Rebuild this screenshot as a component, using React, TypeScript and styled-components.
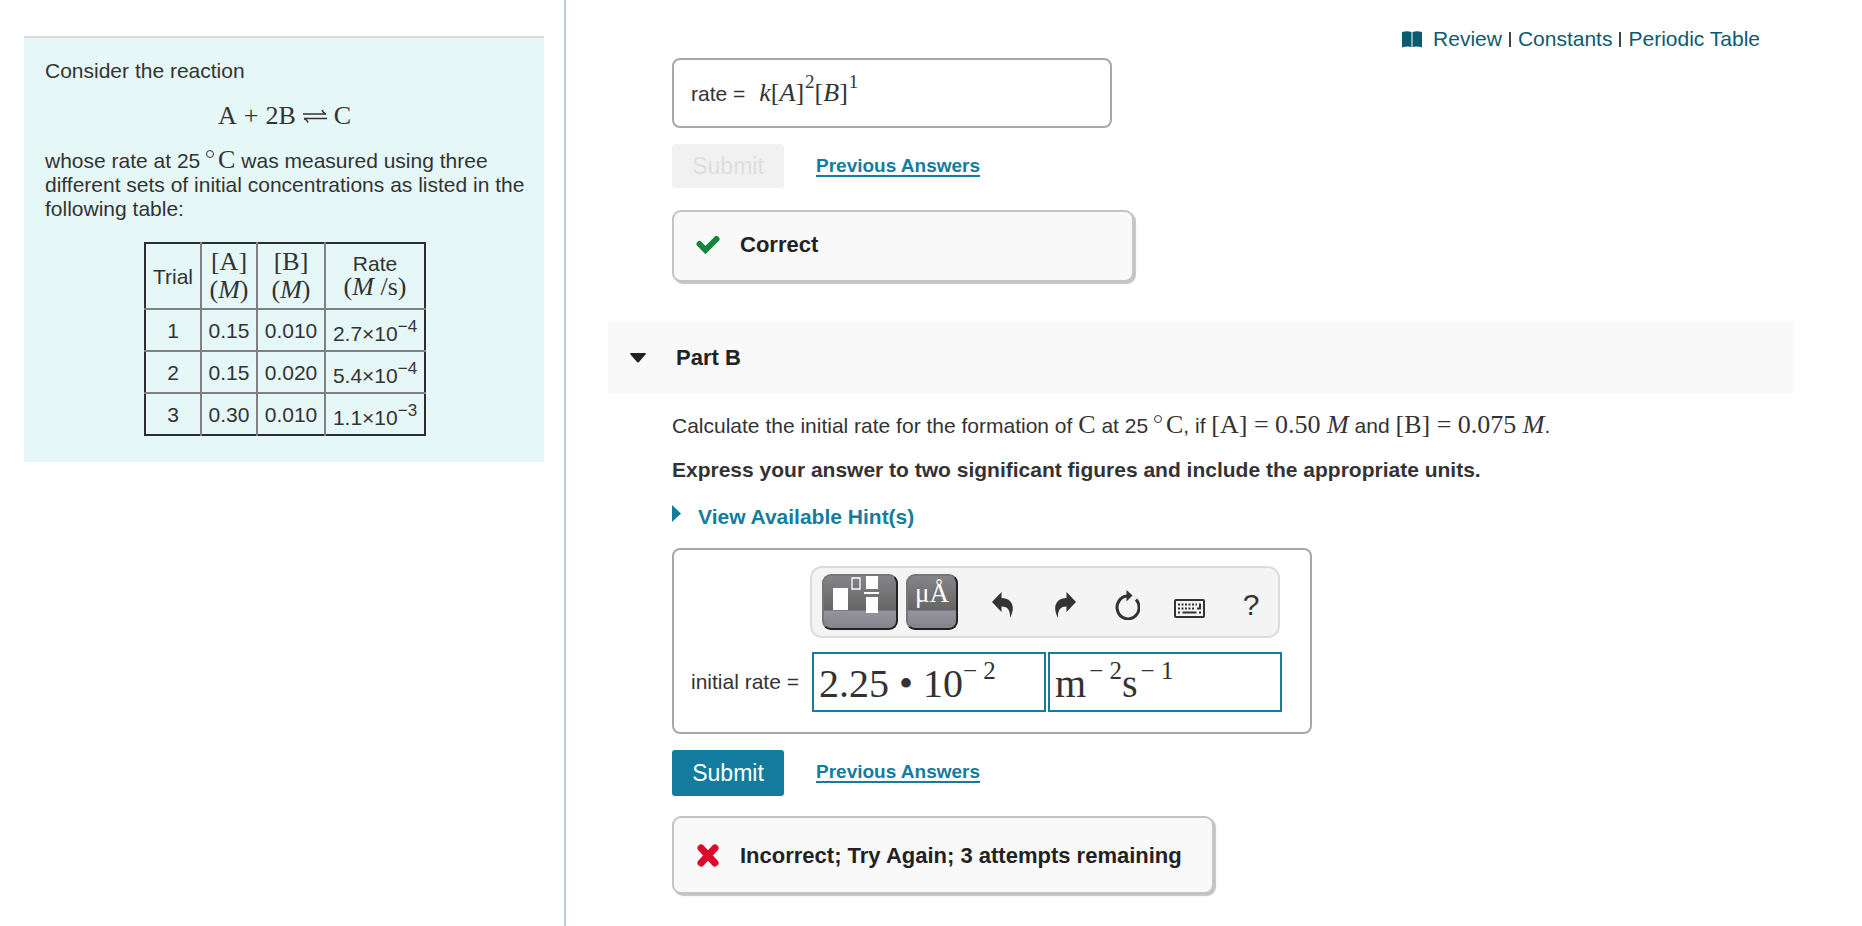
import React from "react";
import styled, { createGlobalStyle } from "styled-components";

const sans = `"Liberation Sans", Arial, Helvetica, sans-serif`;
const serif = `"Liberation Serif", "Times New Roman", serif`;
const teal = "#147c9e";

const GlobalStyle = createGlobalStyle`
  *, *::before, *::after { box-sizing: border-box; }
  body { margin: 0; background: #fff; color: #333; font: 21px/24px ${sans}; }
  button { font: inherit; cursor: pointer; }
`;

const Page = styled.div`
  display: grid;
  grid-template-columns: 566px minmax(0, 1fr);
  min-height: 100vh;
`;

const Side = styled.aside`
  padding: 36px 20px 0 24px;
  border-right: 2px solid #bccbdc;
`;

const Problem = styled.section`
  border-top: 2px solid #dcdcde;
  background: #e6f7f8;
  padding: 21px 14px 26px 21px;
`;

const Para = styled.p`
  margin: 0;
`;

const Equation = styled.div`
  display: flex;
  justify-content: center;
  align-items: center;
  gap: 7px;
  margin: 21px 0;
  padding-right: 6px;
  font: 26px/24px ${serif};
`;

const Math = styled.span`
  font-family: ${serif};
  font-size: 26px;
  line-height: 1px;
  white-space: nowrap;
`;

const Degree = styled.span`
  display: inline-block;
  width: 8px;
  height: 8px;
  margin: 0 4px 0 0;
  border: 1px solid #333;
  border-radius: 50%;
  vertical-align: 10px;
`;

const Power = styled.sup<{ $size: number; $raise: number; $gap?: number }>`
  font-size: ${(p) => p.$size}px;
  line-height: 1px;
  vertical-align: ${(p) => p.$raise}px;
  margin-left: ${(p) => p.$gap ?? 0}px;
`;

const Data = styled.table`
  margin: 21px 0 0 99px;
  width: 282px;
  table-layout: fixed;
  border-collapse: collapse;
  border: 2px solid #2b2d2e;
  text-align: center;

  && thead th { border-top: 0; }
  && tbody tr:last-child td { border-bottom: 0; }
  && tr > :first-child { border-left: 0; }
  && tr > :last-child { border-right: 0; }
`;

const HeadCell = styled.th<{ $width: number; $tight?: boolean }>`
  width: ${(p) => p.$width}px;
  height: 66px;
  padding: ${(p) => (p.$tight ? 0 : 2)}px 0 0;
  border: 2px solid #808080;
  font-weight: normal;
  line-height: ${(p) => (p.$tight ? 24 : 28)}px;
`;

const Cell = styled.td<{ $top?: number }>`
  height: 42px;
  padding: ${(p) => p.$top ?? 2}px 0 0;
  border: 2px solid #808080;
  white-space: nowrap;
`;

const Main = styled.main`
  padding: 26px 69px 26px 42px;
`;

const Resources = styled.nav`
  display: flex;
  justify-content: flex-end;
  align-items: center;
  gap: 7px;
  padding-right: 33px;
  height: 26px;
`;

const BookIcon = styled.svg`
  margin-right: 4px;
`;

const Resource = styled.a`
  color: #0b5b70;
  text-decoration: none;
`;

const Bar = styled.span`
  width: 2px;
  height: 15px;
  background: #444;
`;

const Body = styled.div`
  padding: 0 64px;
`;

const SavedAnswer = styled.div`
  display: flex;
  align-items: center;
  width: 440px;
  height: 70px;
  margin-top: 6px;
  padding: 0 17px;
  border: 2px solid #a8a8a8;
  border-radius: 8px;
`;

const SavedLabel = styled.span`
  margin-right: 14px;
`;

const Actions = styled.div`
  display: flex;
  align-items: flex-start;
  gap: 32px;
  min-height: 46px;
  margin: 16px 0 20px;
`;

const Submit = styled.button`
  width: 112px;
  height: 46px;
  padding: 0;
  border: 0;
  border-radius: 3px;
  background: ${teal};
  color: #fff;
  font-size: 23px;
  &:disabled {
    height: 44px;
    background: #f1f1f1;
    color: #dedede;
    cursor: default;
  }
`;

const Previous = styled.a`
  color: ${teal};
  font-size: 19px;
  line-height: 44px;
  font-weight: bold;
  text-decoration: underline;
  text-decoration-thickness: 2px;
  text-underline-offset: 3px;
`;

const Feedback = styled.div<{ $correct?: boolean }>`
  display: flex;
  align-items: center;
  gap: 20px;
  width: ${(p) => (p.$correct ? 462 : 542)}px;
  min-height: ${(p) => (p.$correct ? 72 : 78)}px;
  padding: ${(p) => (p.$correct ? "0 22px 2px" : "2px 22px 0")};
  border: 2px solid #c4c4c4;
  border-radius: 9px;
  background: #f9f9f9;
  box-shadow: 2px 2px 1px #c4c4c4;
  color: #222;
  font-size: 22px;
  font-weight: bold;
`;

const PartHeader = styled.h2`
  margin: 40px 0 0;
  background: #f9f9f9;
`;

const PartToggle = styled.button`
  display: flex;
  align-items: center;
  gap: 30px;
  width: 100%;
  height: 72px;
  padding: 0 22px;
  border: 0;
  background: none;
  color: #222;
  font-size: 22px;
  font-weight: bold;
`;

const Question = styled.p<{ $strong?: boolean }>`
  margin: 20px 0 0;
  font-weight: ${(p) => (p.$strong ? "bold" : "normal")};
`;

const HintToggle = styled.button`
  display: flex;
  align-items: flex-start;
  gap: 17px;
  margin-top: 23px;
  padding: 0;
  border: 0;
  background: none;
  color: ${teal};
  font-weight: bold;
  line-height: 24px;
`;

const AnswerBox = styled.form`
  display: grid;
  grid-template-columns: 119px 470px;
  row-gap: 14px;
  width: 640px;
  height: 186px;
  margin-top: 19px;
  padding: 16px 17px;
  border: 2px solid #a8a8a8;
  border-radius: 8px;
  align-content: start;
  align-items: center;
`;

const Toolbar = styled.div`
  grid-column: 2;
  display: flex;
  align-items: center;
  gap: 8px;
  height: 72px;
  padding-left: 10px;
  border: 2px solid #dcdcdc;
  border-radius: 12px;
  background: #f4f4f4;
`;

const Palette = styled.button<{ $width: number }>`
  flex: none;
  width: ${(p) => p.$width}px;
  height: 56px;
  padding: 0;
  border: 2px solid #222;
  border-top-color: #77777a;
  border-left-color: #77777a;
  border-radius: 9px;
  overflow: hidden;
  background: linear-gradient(#858589 0, #656565 34px, #94939e 35px, #84848b 100%);
  color: #fff;
  line-height: 0;
`;

const UnitGlyph = styled.span`
  display: block;
  height: 52px;
  font: 27px/34px ${serif};
`;

const Tools = styled.div`
  display: flex;
  gap: 18px;
  margin-left: 15px;
`;

const Tool = styled.button`
  display: flex;
  align-items: center;
  justify-content: center;
  width: 44px;
  height: 56px;
  padding: 6px 0 0;
  border: 0;
  background: none;
  color: #333;
  font-size: 30px;
`;

const Fields = styled.div`
  display: flex;
  gap: 2px;
  margin: 0 -2px 0 2px;
`;

const MathField = styled.div`
  flex: 1;
  height: 60px;
  padding: 0 5px;
  border: 2px solid ${teal};
  background: #fff;
  font: 40px/60px ${serif};
  white-space: nowrap;
  overflow: hidden;
`;

const trials = [
  { trial: 1, a: "0.15", b: "0.010", rate: "2.7", exp: "−4" },
  { trial: 2, a: "0.15", b: "0.020", rate: "5.4", exp: "−4" },
  { trial: 3, a: "0.30", b: "0.010", rate: "1.1", exp: "−3" },
];

function ReactionTable() {
  return (
    <Data>
      <thead>
        <tr>
          <HeadCell scope="col" $width={56}>Trial</HeadCell>
          <HeadCell scope="col" $width={56}><Math>[A]</Math><br /><Math>(<i>M</i>)</Math></HeadCell>
          <HeadCell scope="col" $width={68}><Math>[B]</Math><br /><Math>(<i>M</i>)</Math></HeadCell>
          <HeadCell scope="col" $width={100} $tight>Rate<br /><Math>(<i>M</i> /s)</Math></HeadCell>
        </tr>
      </thead>
      <tbody>
        {trials.map((t) => (
          <tr key={t.trial}>
            <Cell>{t.trial}</Cell>
            <Cell>{t.a}</Cell>
            <Cell>{t.b}</Cell>
            <Cell $top={7}>{t.rate}×10<Power $size={17} $raise={9}>{t.exp}</Power></Cell>
          </tr>
        ))}
      </tbody>
    </Data>
  );
}

export default function App() {
  return (
    <>
      <GlobalStyle />
      <Page>
        <Side>
          <Problem>
            <Para>Consider the reaction</Para>
            <Equation>
              <span>A</span><span>+</span><span>2B</span>
              <svg width="24" height="14" viewBox="0 0 24 14" fill="none" stroke="#333" role="img" aria-label="equilibrium">
                <path d="M0 5h23M1 9.500h23" strokeWidth="1.400" />
                <path d="M23 5q-3-1-4-4M1 9.500q3 1 4 4" strokeWidth="1.600" />
              </svg>
              <span>C</span>
            </Equation>
            <Para>
              whose rate at 25 <Degree /><Math>C</Math> was measured using three different sets of
              initial concentrations as listed in the following table:
            </Para>
            <ReactionTable />
          </Problem>
        </Side>
        <Main>
          <Resources>
            <BookIcon width="20" height="17" viewBox="0 0 20 17" fill="#0b5b70">
              <path d="M0 1Q5-.5 9.500 1V16Q5 15 0 16.500zM10.500 1Q15-.5 20 1V16.500Q15 15 10.500 16z" />
            </BookIcon>
            <Resource href="#review">Review</Resource><Bar />
            <Resource href="#constants">Constants</Resource><Bar />
            <Resource href="#periodic-table">Periodic Table</Resource>
          </Resources>
          <Body>
            <SavedAnswer>
              <div>
                <SavedLabel>rate =</SavedLabel>
                <Math>
                  <i>k</i>[<i>A</i>]<Power $size={19} $raise={13} $gap={1}>2</Power>
                  [<i>B</i>]<Power $size={19} $raise={13} $gap={1}>1</Power>
                </Math>
              </div>
            </SavedAnswer>
            <Actions>
              <Submit disabled>Submit</Submit>
              <Previous href="#previous-a">Previous Answers</Previous>
            </Actions>
            <Feedback $correct>
              <svg width="24" height="20" viewBox="0 0 24 20" fill="none" stroke="#15843f" strokeWidth="6">
                <path d="M3.500 9l6 6L20.500 4" strokeLinecap="round" />
              </svg>
              Correct
            </Feedback>
          </Body>
          <PartHeader>
            <PartToggle aria-expanded="true">
              <svg width="16" height="10" viewBox="0 0 16 10" fill="#222">
                <path d="M1 0h14q1.500 0 .5 1.500L9 9q-1 1.200-2 0L.5 1.500Q-.5 0 1 0z" />
              </svg>
              Part B
            </PartToggle>
          </PartHeader>
          <Body>
            <Question>
              Calculate the initial rate for the formation of <Math>C</Math> at 25 <Degree />
              <Math>C</Math>, if <Math>[A] = 0.50 <i>M</i></Math> and{" "}
              <Math>[B] = 0.075 <i>M</i></Math>.
            </Question>
            <Question $strong>
              Express your answer to two significant figures and include the appropriate units.
            </Question>
            <HintToggle aria-expanded="false">
              <svg width="9" height="17" viewBox="0 0 9 17" fill={teal}><path d="M0 0l9 8.500L0 17z" /></svg>
              View Available Hint(s)
            </HintToggle>
            <AnswerBox onSubmit={(e) => e.preventDefault()}>
              <Toolbar role="toolbar" aria-label="Equation tools">
                <Palette type="button" $width={76} aria-label="Templates">
                  <svg width="72" height="52" viewBox="0 0 72 52" fill="#fff">
                    <path d="M9 12h15v22H9zM42 0h12v13H42zM42 21h12v16H42zM40 16h15v2H40z" />
                    <path d="M28 2h8v11h-8z" fill="none" stroke="#fff" strokeWidth="1.300" />
                  </svg>
                </Palette>
                <Palette type="button" $width={52} aria-label="Symbols and units">
                  <UnitGlyph>μÅ</UnitGlyph>
                </Palette>
                <Tools>
                  <Tool type="button" aria-label="Undo">
                    <svg width="22" height="26" viewBox="0 0 22 26" fill="#333">
                      <path d="M0 10L9.500 0v6C19 6 24.500 14 18 26C18.500 18 15.500 14.500 9.500 14.500V20z" />
                    </svg>
                  </Tool>
                  <Tool type="button" aria-label="Redo">
                    <svg width="22" height="26" viewBox="0 0 22 26" fill="#333">
                      <path d="M22 10L12.500 0v6C3 6-2.500 14 4 26C3.500 18 6.500 14.500 12.500 14.500V20z" />
                    </svg>
                  </Tool>
                  <Tool type="button" aria-label="Reset">
                    <svg width="26" height="30" viewBox="0 0 26 30" fill="none">
                      <path d="M22 9.500A11 11.500 0 1 1 13 6" stroke="#333" strokeWidth="3" />
                      <path d="M12.500 0l6 5.500-6 6z" fill="#333" />
                    </svg>
                  </Tool>
                  <Tool type="button" aria-label="Keyboard">
                    <svg width="31" height="28" viewBox="0 -8 31 28" fill="none" stroke="#333">
                      <rect x="1" y="1" width="29" height="17" rx="1" strokeWidth="2" />
                      <path d="M4 5.500h19M4 9.500h17M4 13.500h2.500M25 13.500h2" strokeWidth="2" strokeDasharray="2 1.500" />
                      <path d="M8.500 13.500h14M26 4.500v5h-3" strokeWidth="2" />
                    </svg>
                  </Tool>
                  <Tool type="button" aria-label="Help">?</Tool>
                </Tools>
              </Toolbar>
              <span id="rate-label">initial rate =</span>
              <Fields>
                <MathField role="textbox" contentEditable suppressContentEditableWarning aria-labelledby="rate-label">
                  2.25 • 10<Power $size={25} $raise={18}>− 2</Power>
                </MathField>
                <MathField role="textbox" contentEditable suppressContentEditableWarning aria-label="units">
                  m<Power $size={25} $raise={18} $gap={3}>− 2</Power>s<Power $size={25} $raise={18} $gap={3}>− 1</Power>
                </MathField>
              </Fields>
            </AnswerBox>
            <Actions>
              <Submit>Submit</Submit>
              <Previous href="#previous-b">Previous Answers</Previous>
            </Actions>
            <Feedback>
              <svg width="24" height="24" viewBox="0 0 24 24" fill="none" stroke="#dc0a2d" strokeWidth="7">
                <path d="M5 4l14 15M19 4L5 19" strokeLinecap="round" />
              </svg>
              Incorrect; Try Again; 3 attempts remaining
            </Feedback>
          </Body>
        </Main>
      </Page>
    </>
  );
}
